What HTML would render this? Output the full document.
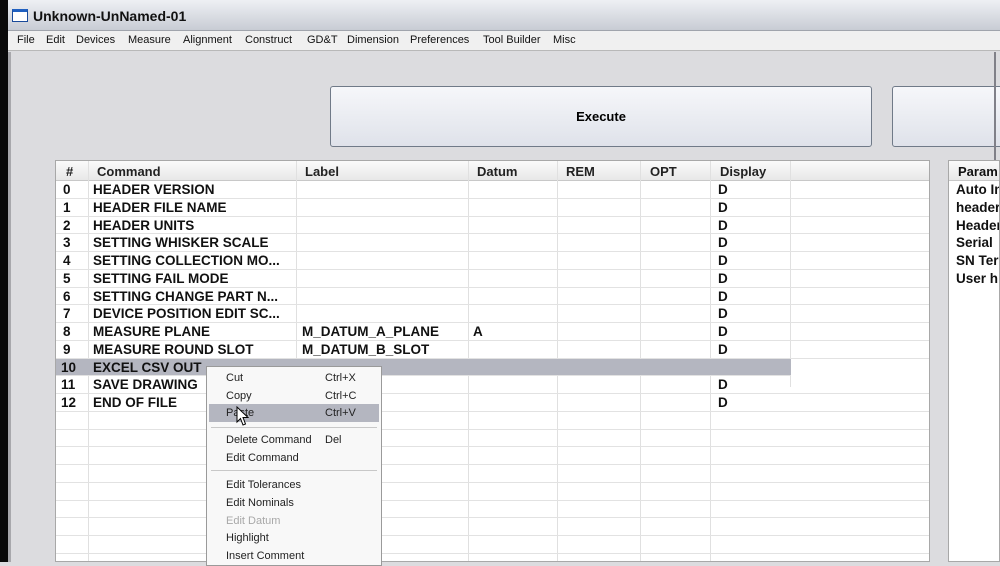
<!DOCTYPE html>
<html><head><style>
*{margin:0;padding:0;box-sizing:border-box}
body{width:1000px;height:562px;overflow:hidden;background:#dcdcdf;font-family:"Liberation Sans",sans-serif;position:relative}
.abs{position:absolute}
.title{left:8px;top:0;width:992px;height:31px;background:linear-gradient(#eef0f4,#c8ccd4);border-bottom:1px solid #a0a4ac}
.menu{left:8px;top:31px;width:992px;height:20px;background:#f0f0f0;border-bottom:1px solid #b8b8b8;font-size:11px;color:#111}
.menu span{position:absolute;top:3px}
.btn{border:1px solid #707a88;border-radius:3px;background:linear-gradient(#f6f7fa,#dfe2ea);font-weight:bold;font-size:13px;text-align:center}
.tbl{left:55px;top:160px;width:875px;height:402px;background:#fff;border:1px solid #a8a8a8}
.hdr{position:absolute;left:0;top:0;height:20px;width:100%;background:linear-gradient(#fbfbfb,#e8e8e8);border-bottom:1px solid #c8c8c8;font-weight:bold;font-size:13px;color:#222}
.hdr span{position:absolute;top:3px}
.row{position:absolute;left:0;height:17.75px;width:100%;border-bottom:1px solid #e2e2e2;font-weight:bold;font-size:13.5px;color:#111}
.row span{position:absolute;top:1px}
.vl{position:absolute;top:0;bottom:0;width:1px;background:#e0e0e0}
.cm{left:206px;top:366px;width:176px;height:200px;background:#f8f8f8;border:1px solid #9a9a9a;font-size:11px;color:#222}
.cm div{position:absolute;left:19px}
.cm .k{left:118px}
.sep{height:1px;background:#c8c8c8;left:4px!important;width:166px}
</style></head><body>
<div class="abs" style="left:0;top:0;width:8px;height:562px;background:#0a0a0a"></div>
<div class="abs title"><div class="abs" style="left:4px;top:9px;width:16px;height:13px;border:1px solid #1a4a9a;background:#fff;border-top:3px solid #2060c0"></div><div class="abs" style="left:25px;top:8px;font-weight:bold;font-size:14px;color:#111">Unknown-UnNamed-01</div></div>
<div class="abs menu">
<span style="left:9px">File</span><span style="left:38px">Edit</span><span style="left:68px">Devices</span><span style="left:120px">Measure</span><span style="left:175px">Alignment</span><span style="left:237px">Construct</span><span style="left:299px">GD&amp;T</span><span style="left:339px">Dimension</span><span style="left:402px">Preferences</span><span style="left:475px">Tool Builder</span><span style="left:545px">Misc</span></div>
<div class="abs" style="left:8px;top:52px;width:3px;height:510px;background:#a8a8ac"></div>
<div class="abs btn" style="left:330px;top:86px;width:542px;height:61px;line-height:59px">Execute</div>
<div class="abs btn" style="left:892px;top:86px;width:120px;height:61px"></div>
<div class="abs" style="left:994px;top:52px;width:2px;height:510px;background:#808088"></div>
<div class="abs tbl">
<div class="hdr"><span style="left:10px">#</span><span style="left:41px">Command</span><span style="left:249px">Label</span><span style="left:421px">Datum</span><span style="left:510px">REM</span><span style="left:594px">OPT</span><span style="left:664px">Display</span></div>
<div class="vl" style="left:32px"></div><div class="vl" style="left:240px"></div><div class="vl" style="left:412px"></div><div class="vl" style="left:501px"></div><div class="vl" style="left:584px"></div><div class="vl" style="left:654px"></div><div class="vl" style="left:734px;top:0;height:226px"></div>
<div class="row" style="top:20px"><span style="left:7px">0</span><span style="left:37px">HEADER VERSION</span><span style="left:662px">D</span></div>
<div class="row" style="top:37.75px"><span style="left:7px">1</span><span style="left:37px">HEADER FILE NAME</span><span style="left:662px">D</span></div>
<div class="row" style="top:55.5px"><span style="left:7px">2</span><span style="left:37px">HEADER UNITS</span><span style="left:662px">D</span></div>
<div class="row" style="top:73.25px"><span style="left:7px">3</span><span style="left:37px">SETTING WHISKER SCALE</span><span style="left:662px">D</span></div>
<div class="row" style="top:91px"><span style="left:7px">4</span><span style="left:37px">SETTING COLLECTION MO...</span><span style="left:662px">D</span></div>
<div class="row" style="top:108.75px"><span style="left:7px">5</span><span style="left:37px">SETTING FAIL MODE</span><span style="left:662px">D</span></div>
<div class="row" style="top:126.5px"><span style="left:7px">6</span><span style="left:37px">SETTING CHANGE PART N...</span><span style="left:662px">D</span></div>
<div class="row" style="top:144.25px"><span style="left:7px">7</span><span style="left:37px">DEVICE POSITION EDIT SC...</span><span style="left:662px">D</span></div>
<div class="row" style="top:162px"><span style="left:7px">8</span><span style="left:37px">MEASURE PLANE</span><span style="left:246px">M_DATUM_A_PLANE</span><span style="left:417px">A</span><span style="left:662px">D</span></div>
<div class="row" style="top:179.75px"><span style="left:7px">9</span><span style="left:37px">MEASURE ROUND SLOT</span><span style="left:246px">M_DATUM_B_SLOT</span><span style="left:662px">D</span></div>
<div class="row" style="top:197.5px;width:735px;background:#b4b6c0"><span style="left:5px">10</span><span style="left:37px">EXCEL CSV OUT</span></div>
<div class="row" style="top:215.25px"><span style="left:5px">11</span><span style="left:37px">SAVE DRAWING</span><span style="left:662px">D</span></div>
<div class="row" style="top:233px"><span style="left:5px">12</span><span style="left:37px">END OF FILE</span><span style="left:662px">D</span></div>
<div class="row" style="top:250.75px"></div><div class="row" style="top:268.5px"></div><div class="row" style="top:286.25px"></div><div class="row" style="top:304px"></div><div class="row" style="top:321.75px"></div><div class="row" style="top:339.5px"></div><div class="row" style="top:357.25px"></div><div class="row" style="top:375px"></div>
</div>
<div class="abs" style="left:948px;top:160px;width:52px;height:402px;background:#fff;border:1px solid #a8a8a8;font-weight:bold;font-size:13.5px;color:#111;overflow:hidden">
<div style="height:20px;background:linear-gradient(#fbfbfb,#e8e8e8);border-bottom:1px solid #c8c8c8;padding:3px 0 0 9px;font-size:13px">Param</div>
<div style="padding-left:7px;line-height:17.75px;white-space:nowrap">Auto In<br>header<br>Header<br>Serial<br>SN Ter<br>User h</div></div>
<div class="abs cm">
<div style="top:5px">Cut</div><div class="k" style="top:5px">Ctrl+X</div>
<div style="top:23px">Copy</div><div class="k" style="top:23px">Ctrl+C</div>
<div style="top:37px;left:2px;width:170px;height:18px;background:#b4b6c0"></div>
<div style="top:40px">Paste</div><div class="k" style="top:40px">Ctrl+V</div>
<div class="sep" style="top:60px"></div>
<div style="top:67px">Delete Command</div><div class="k" style="top:67px">Del</div>
<div style="top:85px">Edit Command</div>
<div class="sep" style="top:103px"></div>
<div style="top:112px">Edit Tolerances</div>
<div style="top:130px">Edit Nominals</div>
<div style="top:148px;color:#a8a8a8">Edit Datum</div>
<div style="top:165px">Highlight</div>
<div style="top:183px">Insert Comment</div>
</div>
<svg class="abs" style="left:236px;top:406px" width="14" height="22"><path d="M1 1 L1 16 L4.5 12.5 L7 19 L9.5 18 L7 11.5 L12 11.5 Z" fill="#fff" stroke="#000" stroke-width="1"/></svg>
</body></html>
